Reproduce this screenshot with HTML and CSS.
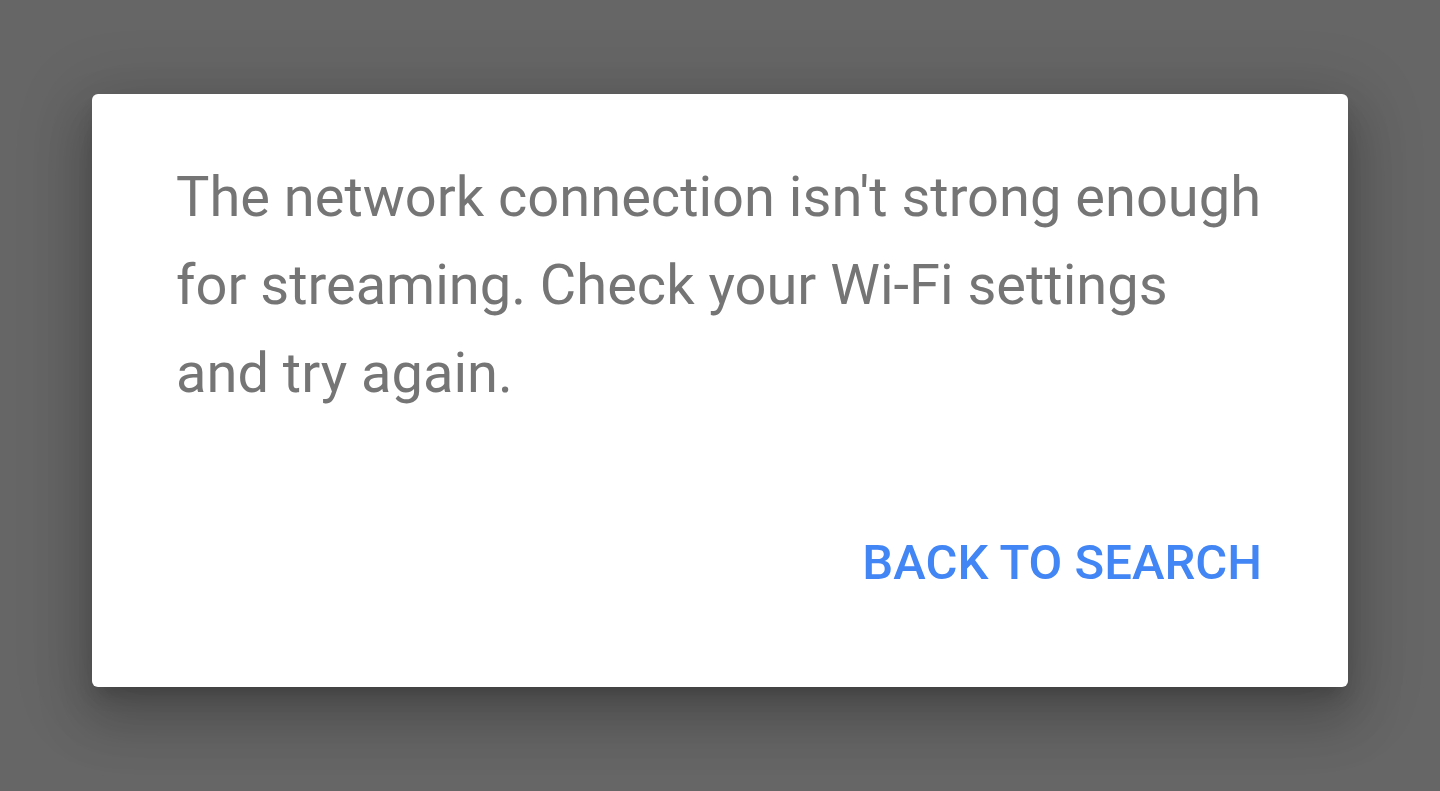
FILE: index.html
```html
<!DOCTYPE html>
<html lang="en">
<head>
<meta charset="utf-8">
<title>Network error</title>
<link rel="stylesheet" href="styles.css">
</head>
<body>
<div class="page">
  <div class="dialog" role="dialog">
    <p class="message">The network connection isn't strong enough for streaming. Check your Wi-Fi settings and try again.</p>
    <div class="actions">
      <button class="action" type="button">BACK TO SEARCH</button>
    </div>
  </div>
</div>
</body>
</html>
```
FILE: styles.css
```css
html, body {
  margin: 0;
  padding: 0;
  background: #666666;
}
.page {
  box-sizing: border-box;
  min-height: 100vh;
  display: flex;
  justify-content: center;
  align-items: flex-start;
  padding-top: 94px;
  font-family: Roboto, "Noto Sans", sans-serif;
}
.dialog {
  box-sizing: border-box;
  width: 1256px;
  height: 593px;
  background: #ffffff;
  border-radius: 6px;
  box-shadow: 0 12px 18px -6px rgba(0,0,0,0.18), 0 28px 50px 8px rgba(0,0,0,0.16), 0 12px 70px 14px rgba(0,0,0,0.12);
  padding: 59px 84px 0 84px;
}
.message {
  margin: 0;
  font-size: 56px;
  line-height: 88px;
  color: #757575;
  font-weight: 400;
}
.actions {
  display: flex;
  justify-content: flex-end;
  margin-top: 121px;
  padding-right: 2px;
}
.action {
  border: 0;
  background: none;
  padding: 0;
  font-family: Roboto, "Noto Sans", sans-serif;
  font-size: 49px;
  line-height: 50px;
  font-weight: 500;
  color: #4285f4;
  cursor: pointer;
}
```
